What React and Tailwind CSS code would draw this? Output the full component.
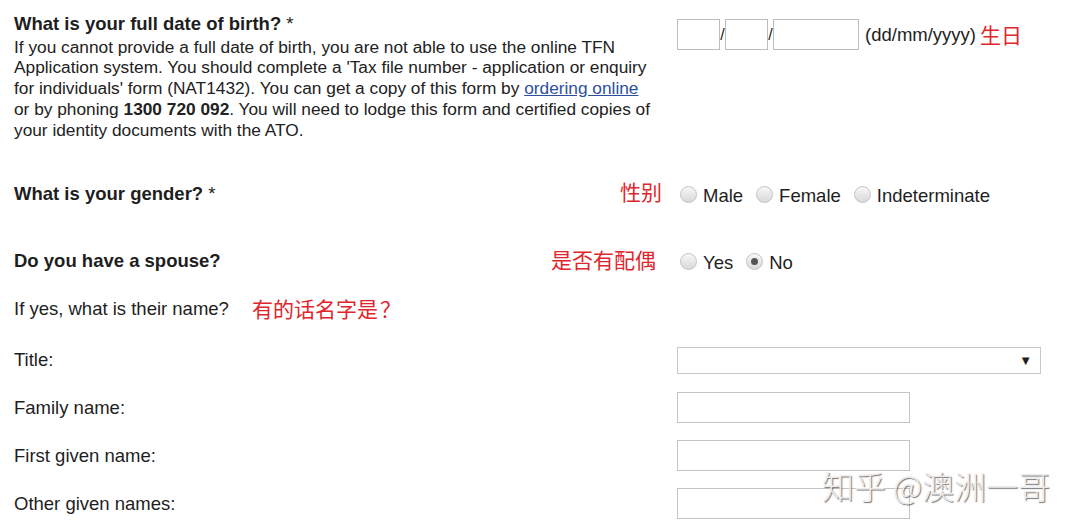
import React from "react";

const cn = { fontFamily: '"Noto Sans CJK SC", sans-serif' };

function Radio({ checked }) {
  return (
    <span className="relative inline-flex h-[17px] w-[17px] shrink-0 items-center justify-center rounded-full border border-[#c3c3c3] bg-gradient-to-b from-[#f7f7f7] to-[#d9d9d9] -translate-y-[2px]">
      {checked && <span className="h-[7px] w-[7px] rounded-full bg-[#555]" />}
    </span>
  );
}

function Opt({ label, checked }) {
  return (
    <span className="flex items-center gap-[6px]">
      <Radio checked={checked} />
      <span>{label}</span>
    </span>
  );
}

export default function App() {
  return (
    <div
      className="relative h-[529px] w-[1080px] overflow-hidden bg-white text-[#1e1e1e]"
      style={{ fontFamily: '"Liberation Sans", Arial, sans-serif' }}
    >
      {/* DOB */}
      <div className="grid h-[152px] grid-cols-[663px_1fr] items-start pl-[14px] pt-[13px]">
        <div>
          <div className="text-[18.5px] font-bold leading-[22px]">
            What is your full date of birth? <span className="font-normal">*</span>
          </div>
          <div className="mt-[1.5px] whitespace-nowrap text-[17.3px] leading-[20.75px] text-[#222]">
            If you cannot provide a full date of birth, you are not able to use the online TFN
            <br />
            Application system. You should complete a 'Tax file number - application or enquiry
            <br />
            for individuals' form (NAT1432). You can get a copy of this form by{" "}
            <a className="text-[#2d4f9e] underline">ordering online</a>
            <br />
            or by phoning <b>1300 720 092</b>. You will need to lodge this form and certified copies of
            <br />
            your identity documents with the ATO.
          </div>
        </div>
        <div className="mt-[6px] flex items-center text-[18.5px]">
          <span className="h-[31px] w-[43px] border border-[#bdbdbd]" />
          <span className="w-[5px] text-center text-[16px]">/</span>
          <span className="h-[31px] w-[43px] border border-[#bdbdbd]" />
          <span className="w-[5px] text-center text-[16px]">/</span>
          <span className="h-[31px] w-[86px] border border-[#bdbdbd]" />
          <span className="ml-[6px]">(dd/mm/yyyy)</span>
          <span className="ml-[4px] text-[21px] text-[#e0262d]" style={cn}>生日</span>
        </div>
      </div>

      {/* Gender */}
      <div className="grid h-[84px] grid-cols-[663px_1fr] items-center pl-[14px] text-[18.5px]">
        <div className="flex items-center justify-between pr-[15px]">
          <span className="font-bold">
            What is your gender? <span className="font-normal">*</span>
          </span>
          <span className="text-[21px] text-[#e0262d] -translate-y-[2px]" style={cn}>性别</span>
        </div>
        <div className="flex items-center gap-[13px] pl-[3px] pt-[4px]">
          <Opt label="Male" />
          <Opt label="Female" />
          <Opt label="Indeterminate" />
        </div>
      </div>

      {/* Spouse */}
      <div className="grid h-[50px] grid-cols-[663px_1fr] items-center pl-[14px] text-[18.5px]">
        <div className="flex items-center justify-between pr-[21px]">
          <span className="font-bold">Do you have a spouse?</span>
          <span className="text-[21px] text-[#e0262d] -translate-y-[1px]" style={cn}>是否有配偶</span>
        </div>
        <div className="flex items-center gap-[13px] pl-[3px] pt-[4px]">
          <Opt label="Yes" />
          <Opt label="No" checked />
        </div>
      </div>

      {/* If yes */}
      <div className="flex h-[46px] items-center pl-[14px] text-[18.5px]">
        <span>If yes, what is their name?</span>
        <span className="ml-[23px] text-[21px] text-[#e0262d]" style={cn}>
          有的话名字是<span className="inline-block w-[23px] text-right">？</span>
        </span>
      </div>

      {/* Title */}
      <div className="grid h-[51.5px] grid-cols-[663px_1fr] items-center pl-[14px] pt-[5px] text-[18.5px]">
        <span>Title:</span>
        <div className="flex h-[27px] w-[364px] items-center justify-end border border-[#c8c8c8] pr-[8px]">
          <span className="text-[13px] leading-none">▼</span>
        </div>
      </div>

      {[
        "Family name:",
        "First given name:",
        "Other given names:",
      ].map((l) => (
        <div
          key={l}
          className="grid h-[48px] grid-cols-[663px_1fr] items-center pl-[14px] text-[18.5px]"
        >
          <span>{l}</span>
          <span className="h-[31px] w-[233px] border border-[#c4c4c4]" />
        </div>
      ))}

      {/* watermark */}
      <div
        className="absolute left-[822px] top-[466px] text-[32px] font-light leading-[38px] text-[#ececec] [text-shadow:1px_1px_1px_rgba(0,0,0,0.55)]"
        style={cn}
      >
        知乎 @澳洲一哥
      </div>
    </div>
  );
}
